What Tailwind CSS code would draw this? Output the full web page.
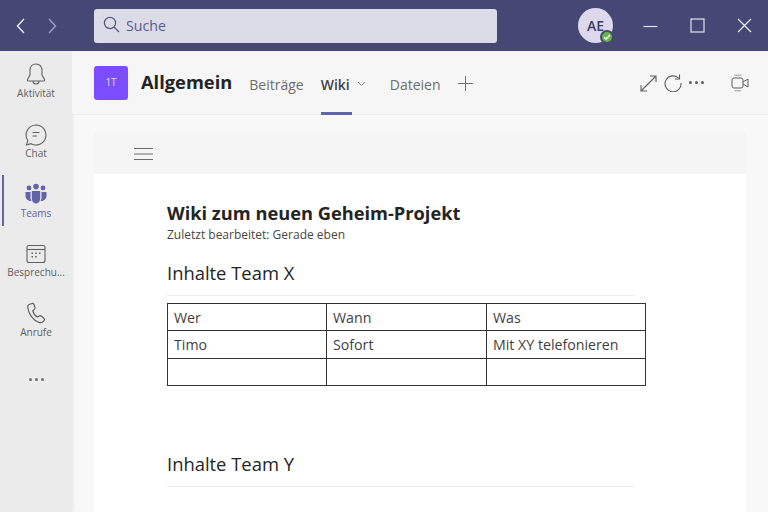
<!DOCTYPE html>
<html lang="de">
<head>
  <meta charset="UTF-8">
  <title>Allgemein - Wiki</title>
  <script src="https://cdn.jsdelivr.net/npm/@tailwindcss/browser@4"></script>
</head>
<body class="w-[768px] h-[512px] overflow-hidden bg-[#f8f8f8] font-['Open_Sans',sans-serif]">
  <!-- title bar -->
  <header class="h-[51px] bg-[#464775] flex items-center">
    <div class="w-[94px] flex items-center shrink-0">
      <svg class="ml-[15px] w-[12px] h-[18px]" viewBox="0 0 12 18" fill="none" stroke="#e8e8f4" stroke-width="1.5"><path d="M9 2L2.5 9L9 16"/></svg>
      <svg class="ml-[19px] w-[12px] h-[18px]" viewBox="0 0 12 18" fill="none" stroke="#9c9dc6" stroke-width="1.5"><path d="M3 2L9.5 9L3 16"/></svg>
    </div>
    <div class="w-[403px] h-[34px] bg-[#dcdce8] rounded-[3px] flex items-center pl-[9px] shrink-0">
      <svg class="w-[17px] h-[17px] -mt-[2px]" viewBox="0 0 17 17" fill="none" stroke="#55567d" stroke-width="1.2"><circle cx="7" cy="7" r="5.6"/><path d="M11 11L16 16"/></svg>
      <span class="ml-[6px] mt-[1px] text-[14.2px] text-[#5a5b88]">Suche</span>
    </div>
    <div class="relative ml-[81px] w-[35px] h-[35px] rounded-full bg-[#dcd9ec] flex items-center justify-center text-[14px] font-semibold text-[#3d3e66]">
      AE
      <span class="absolute right-[-1px] bottom-[-1px] w-[14px] h-[14px] rounded-full bg-[#6bb34a] border-2 border-[#464775] flex items-center justify-center">
        <svg class="w-[8px] h-[8px]" viewBox="0 0 8 8" fill="none" stroke="#fff" stroke-width="1.3"><path d="M1 4.2L3.2 6L7 2"/></svg>
      </span>
    </div>
    <svg class="ml-[30px] w-[15px] h-[16px]" viewBox="0 0 15 16" fill="none" stroke="#e2e2f0" stroke-width="1.2"><path d="M0.500 8.500H14.500"/></svg>
    <svg class="ml-[32px] w-[15px] h-[15px]" viewBox="0 0 15 15" fill="none" stroke="#e2e2f0" stroke-width="1.2"><rect x="1" y="1" width="13" height="13"/></svg>
    <svg class="ml-[32px] w-[15px] h-[15px]" viewBox="0 0 15 15" fill="none" stroke="#f0f0f8" stroke-width="1.2"><path d="M1 1L14 14M14 1L1 14"/></svg>
  </header>

  <div class="flex h-[461px]">
    <!-- left rail -->
    <nav class="w-[72px] shrink-0 h-full bg-[#ebebeb] shadow-[1px_0_3px_rgba(0,0,0,0.07)] flex flex-col items-center relative text-[10px] leading-[14px] text-[#616161]">
      <div class="absolute left-[2px] top-[124px] w-[2px] h-[51px] bg-[#6264a7]"></div>
      <div class="h-[60px] pt-[11px] flex flex-col items-center">
        <svg class="w-[22px] h-[24px]" viewBox="0 0 22 24" fill="none" stroke="#616161" stroke-width="1.1"><path d="M11 2C7 2 5 5 5 8.5V13L2.5 17.5C2.2 18.2 2.6 19 3.5 19H18.5C19.4 19 19.8 18.2 19.5 17.5L17 13V8.5C17 5 15 2 11 2Z"/><path d="M8 19C8 21 9.5 22 11 22S14 21 14 19"/></svg>
        <span>Aktivität</span>
      </div>
      <div class="h-[60px] pt-[12px] flex flex-col items-center">
        <svg class="w-[22px] h-[24px]" viewBox="0 0 22 24" fill="none" stroke="#616161" stroke-width="1.1"><path d="M11 2A10 10 0 1 1 6 20.7L1.5 22L2.8 17.5A10 10 0 0 1 11 2Z"/><path d="M7.5 9.5H14.5M7.5 13H12"/></svg>
        <span class="-mt-[1px]">Chat</span>
      </div>
      <div class="h-[60px] pt-[12px] flex flex-col items-center text-[#6264a7]">
        <svg class="w-[22px] h-[22px]" viewBox="0 0 22 22" fill="#6264a7"><circle cx="4" cy="5" r="2.4"/><circle cx="11" cy="3.6" r="2.8"/><circle cx="18" cy="5" r="2.4"/><path d="M0.5 9H5.5V15C5.5 16.5 6 17 6.5 18C3 18.5 0.5 15.5 0.5 13Z"/><path d="M21.500 9H16.500V15C16.500 16.500 16 17 15.500 18C19 18.500 21.500 15.500 21.500 13Z"/><path d="M6.800 8H15.200V15.500C15.200 18 13.500 20.500 11 20.500S6.800 18 6.800 15.500Z"/></svg>
        <span class="mt-[1px]">Teams</span>
      </div>
      <div class="h-[60px] pt-[13px] flex flex-col items-center">
        <svg class="w-[20px] h-[20px]" viewBox="0 0 20 20" fill="none" stroke="#616161" stroke-width="1.100"><rect x="1" y="1.500" width="18" height="17" rx="2"/><path d="M1 5.500H19"/><g fill="#616161" stroke="none"><rect x="5.500" y="8.500" width="1.500" height="1.500"/><rect x="9.200" y="8.500" width="1.500" height="1.500"/><rect x="13" y="8.500" width="1.500" height="1.500"/><rect x="5.500" y="12" width="1.500" height="1.500"/><rect x="9.200" y="12" width="1.500" height="1.500"/></g></svg>
        <span class="mt-[1px] w-[60px] text-center whitespace-nowrap">Besprechu...</span>
      </div>
      <div class="h-[60px] pt-[11px] flex flex-col items-center">
        <svg class="w-[20px] h-[22px]" viewBox="0 0 20 22" fill="none" stroke="#616161" stroke-width="1.200"><path d="M3 2.500L6 1.500C7 1.200 7.600 1.700 8 2.500L9 5.500C9.300 6.500 9 7 8 7.800L6.800 8.800C7.300 11 9.500 14 11.500 15L13 14C14 13.300 14.700 13.500 15.500 14.200L18 16.500C18.700 17.300 18.600 18 18 18.800L16.500 20C15.500 20.800 14 20.800 12.500 20.200C7 18 2.800 12 1.800 6C1.600 4.500 2 3 3 2.500Z"/></svg>
        <span class="mt-[1px]">Anrufe</span>
      </div>
      <div class="mt-[27px] flex gap-[3px]">
        <span class="w-[3px] h-[3px] rounded-full bg-[#717171]"></span>
        <span class="w-[3px] h-[3px] rounded-full bg-[#717171]"></span>
        <span class="w-[3px] h-[3px] rounded-full bg-[#717171]"></span>
      </div>
    </nav>

    <main class="flex-1 min-w-0">
      <!-- channel header -->
      <div class="h-[64px] flex items-center bg-[#f6f6f6] border-b border-[#eeeeee] relative">
        <div class="ml-[22px] w-[34px] h-[34px] rounded-[3px] bg-[#7c4dff] flex items-center justify-center text-[10px] text-[#e4dcff]">1T</div>
        <span class="ml-[13px] text-[18.3px] font-bold text-[#242424] leading-none">Allgemein</span>
        <span class="ml-[17px] mt-[4px] text-[14px] text-[#6e6e6e]">Beiträge</span>
        <span class="ml-[17px] mt-[4px] text-[14px] font-semibold text-[#424242]">Wiki</span>
        <svg class="ml-[7px] mt-[2px] w-[9px] h-[6px]" viewBox="0 0 9 6" fill="none" stroke="#777" stroke-width="0.900"><path d="M1 1L4.500 4.500L8 1"/></svg>
        <span class="ml-[24px] mt-[4px] text-[14px] text-[#6e6e6e]">Dateien</span>
        <svg class="ml-[17px] mt-[1px] w-[15px] h-[15px]" viewBox="0 0 15 15" fill="none" stroke="#6e6e6e" stroke-width="1"><path d="M7.500 0V15M0 7.500H15"/></svg>
        <svg class="ml-[167px] mt-[1px] w-[17px] h-[17px]" viewBox="0 0 17 17" fill="none" stroke="#5f5f5f" stroke-width="1.100"><path d="M1 16L16 1M10 1H16V7M1 10V16H7"/></svg>
        <svg class="ml-[7px] w-[18px] h-[18px]" viewBox="0 0 18 18" fill="none" stroke="#5f5f5f" stroke-width="1.100"><path d="M15 4.500A8 8 0 1 0 17 9"/><path d="M15.500 0.500V5H11"/></svg>
        <div class="ml-[7px] flex gap-[3px]">
          <span class="w-[3px] h-[3px] rounded-full bg-[#5f5f5f]"></span>
          <span class="w-[3px] h-[3px] rounded-full bg-[#5f5f5f]"></span>
          <span class="w-[3px] h-[3px] rounded-full bg-[#5f5f5f]"></span>
        </div>
        <svg class="ml-[27px] w-[18px] h-[18px]" viewBox="0 0 18 18" fill="none" stroke="#5f5f5f" stroke-width="1"><rect x="1" y="4" width="11" height="10" rx="2"/><path d="M12 8L17 5V13L12 10"/><path d="M3.500 1.200H10M3.500 16.800H10" stroke="#9a9a9a"/></svg>
        <div class="absolute left-[249px] bottom-[-1px] w-[31px] h-[3px] bg-[#6264a7]"></div>
      </div>

      <!-- wiki panel -->
      <div class="mx-[22px] mt-[17px]">
        <div class="h-[42px] bg-[#f5f5f5] pl-[40px] pt-[1px] flex items-center">
          <svg class="w-[19px] h-[14px]" viewBox="0 0 19 14" fill="none" stroke="#6a6a6a" stroke-width="1.100"><path d="M0 1.500H19M0 7H19M0 12.500H19"/></svg>
        </div>
        <div class="bg-white h-[340px] pl-[73px] pr-[111px] pt-[27px] text-[#252423]">
          <h1 class="text-[18.25px] leading-[24px] font-bold whitespace-nowrap">Wiki zum neuen Geheim-Projekt</h1>
          <p class="mt-[2px] text-[12px] leading-[16px] text-[#484644]">Zuletzt bearbeitet: Gerade eben</p>
          <h2 class="mt-[17px] text-[18.4px] leading-[25px] pb-[10px] border-b border-[#ececec] font-normal">Inhalte Team X</h2>
          <table class="mt-[7px] w-[479px] border-collapse table-fixed text-[14.2px] text-[#3f3f3f]">
            <tr class="h-[27px]">
              <td class="border border-[#333] px-[6px] pt-[2px] pb-0 w-[159px]">Wer</td>
              <td class="border border-[#333] px-[6px] pt-[2px] pb-0 w-[160px]">Wann</td>
              <td class="border border-[#333] px-[6px] pt-[2px] pb-0">Was</td>
            </tr>
            <tr class="h-[28px]">
              <td class="border border-[#333] px-[6px] pt-[1px] pb-0">Timo</td>
              <td class="border border-[#333] px-[6px] pt-[1px] pb-0">Sofort</td>
              <td class="border border-[#333] px-[6px] pt-[1px] pb-0">Mit XY telefonieren</td>
            </tr>
            <tr class="h-[27px]">
              <td class="border border-[#333] px-[6px] py-0"></td>
              <td class="border border-[#333] px-[6px] py-0"></td>
              <td class="border border-[#333] px-[6px] py-0"></td>
            </tr>
          </table>
          <h2 class="mt-[65px] text-[18.4px] leading-[25px] pb-[10px] border-b border-[#ececec] font-normal">Inhalte Team Y</h2>
        </div>
      </div>
    </main>
  </div>
</body>
</html>
